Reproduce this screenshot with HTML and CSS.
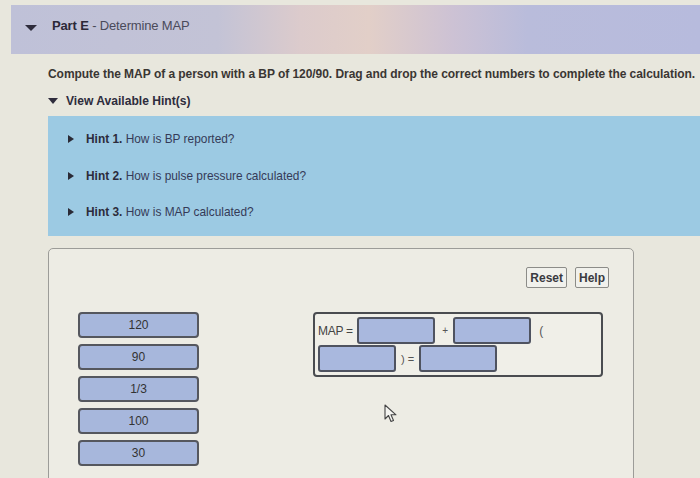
FILE: index.html
```html
<!DOCTYPE html>
<html>
<head>
<meta charset="utf-8">
<link rel="stylesheet" href="styles.css">
</head>
<body>
<div class="page">
  <div class="part-header">
    <span class="tri-down big"></span>
    <span class="part-title"><b>Part E</b> - Determine MAP</span>
  </div>
  <div class="content">
    <p class="question">Compute the <b>MAP</b> of a person with a BP of 120/90. Drag and drop the correct numbers to complete the calculation.</p>
    <div class="hint-toggle"><span class="tri-down"></span><span>View Available Hint(s)</span></div>
    <div class="hints">
      <div class="hint"><span class="tri-right"></span><span><b>Hint 1.</b> How is BP reported?</span></div>
      <div class="hint"><span class="tri-right"></span><span><b>Hint 2.</b> How is pulse pressure calculated?</span></div>
      <div class="hint"><span class="tri-right"></span><span><b>Hint 3.</b> How is MAP calculated?</span></div>
    </div>
    <div class="workspace">
      <div class="tools">
        <button class="btn">Reset</button>
        <button class="btn">Help</button>
      </div>
      <div class="work-body">
        <div class="tiles">
          <div class="tile">120</div>
          <div class="tile">90</div>
          <div class="tile">1/3</div>
          <div class="tile">100</div>
          <div class="tile">30</div>
        </div>
        <div class="equation">
          <div class="eq-row">
            <span class="eq-text">MAP =</span>
            <span class="drop"></span>
            <span class="eq-op">+</span>
            <span class="drop"></span>
            <span class="eq-op paren">(</span>
          </div>
          <div class="eq-row second">
            <span class="drop"></span>
            <span class="eq-op close">) =</span>
            <span class="drop"></span>
          </div>
        </div>
      </div>
      <svg class="cursor" width="14" height="20" viewBox="0 0 14 20">
        <path d="M1 1 L1 15 L4.5 11.5 L7 17.5 L9.5 16.5 L7 10.8 L12 10.8 Z" fill="#f4f4f0" stroke="#444" stroke-width="1.1" stroke-linejoin="round"/>
      </svg>
    </div>
  </div>
</div>
</body>
</html>
```

FILE: styles.css
```css
html, body {
  margin: 0;
  padding: 0;
}
body {
  background: #e8e7dd;
  font-family: "Liberation Sans", Arial, sans-serif;
  color: #2f2d33;
  width: 700px;
  height: 478px;
  overflow: hidden;
}
.page {
  padding-top: 5px;
}
.part-header {
  margin-left: 11px;
  height: 49px;
  display: flex;
  align-items: center;
  background: linear-gradient(90deg, #bfc1d8 0%, #c3c3d6 30%, #dccbcc 42%, #e2cfc8 52%, #cdc2d4 64%, #b9bcdb 75%, #b7bbdd 100%);
}
.part-header .tri-down.big {
  margin-left: 14px;
  margin-right: 15px;
  margin-top: -4px;
  border-left: 6px solid transparent;
  border-right: 6px solid transparent;
  border-top: 6px solid #2e2c3c;
}
.part-title {
  font-size: 13px;
  color: #4a4a5a;
  margin-top: -9px;
  letter-spacing: -0.15px;
}
.part-title b {
  color: #2c2838;
}
.content {
  padding-left: 48px;
}
.question {
  margin: 12px 0 0 0;
  font-size: 12px;
  font-weight: bold;
  color: #3a3633;
  line-height: 16px;
  white-space: nowrap;
  letter-spacing: -0.05px;
}
.hint-toggle {
  display: flex;
  align-items: center;
  margin-top: 11px;
  font-size: 12.1px;
  font-weight: bold;
  color: #2e2c3c;
  height: 16px;
}
.tri-down {
  display: inline-block;
  width: 0;
  height: 0;
  border-left: 5px solid transparent;
  border-right: 5px solid transparent;
  border-top: 6px solid #2e2c3c;
  margin-right: 8px;
}
.hints {
  margin-top: 7px;
  background: #9ccae3;
  height: 120px;
  padding-top: 15px;
  box-sizing: border-box;
}
.hint {
  display: flex;
  align-items: center;
  height: 16px;
  margin-bottom: 20.5px;
  padding-left: 20px;
  font-size: 11.9px;
  color: #353a58;
}
.hint b {
  color: #2c2c3c;
}
.tri-right {
  display: inline-block;
  width: 0;
  height: 0;
  border-top: 4.5px solid transparent;
  border-bottom: 4.5px solid transparent;
  border-left: 6px solid #2a2a36;
  margin-right: 12px;
}
.workspace {
  position: relative;
  margin-top: 12px;
  width: 586px;
  height: 240px;
  box-sizing: border-box;
  border: 1.5px solid #9c9c98;
  border-radius: 5px;
  background: #edece4;
}
.tools {
  display: flex;
  justify-content: flex-end;
  gap: 8px;
  padding: 18px 24px 0 0;
}
.btn {
  font-family: "Liberation Sans", Arial, sans-serif;
  font-weight: bold;
  font-size: 12px;
  color: #3a3a40;
  background: #f1f1ec;
  border: 1.5px solid #8c8c88;
  border-radius: 2px;
  height: 21px;
  padding: 0 3px;
  line-height: 18px;
}
.work-body {
  display: flex;
  margin-top: 24px;
  padding-left: 29px;
}
.tiles {
  display: flex;
  flex-direction: column;
  gap: 6px;
  width: 121px;
}
.tile {
  height: 26px;
  box-sizing: border-box;
  background: #a7b7dc;
  border: 2px solid #55575e;
  border-radius: 4px;
  text-align: center;
  font-size: 12px;
  line-height: 22px;
  color: #333;
}
.equation {
  margin-left: 114px;
  width: 290px;
  height: 65px;
  box-sizing: border-box;
  border: 2px solid #4a4c50;
  border-radius: 4px;
  padding: 3px 0 0 3px;
  background: #f0efe8;
}
.eq-row {
  display: flex;
  align-items: center;
  height: 27px;
}
.eq-row.second {
  margin-top: 1px;
}
.eq-text {
  font-size: 12px;
  color: #444;
  margin-right: 4px;
  letter-spacing: -0.3px;
}
.drop {
  width: 78px;
  height: 27px;
  box-sizing: border-box;
  background: #a9b8de;
  border: 2px solid #4f5360;
  border-radius: 3px;
}
.eq-op {
  font-size: 10px;
  color: #555;
  width: 18px;
  text-align: center;
  padding-left: 3px;
  box-sizing: border-box;
}
.eq-op.paren {
  font-size: 12px;
  width: 18px;
}
.eq-op.close {
  width: 23px;
  font-size: 11px;
  padding-left: 0;
}
.cursor {
  position: absolute;
  left: 335px;
  top: 155px;
}
```
